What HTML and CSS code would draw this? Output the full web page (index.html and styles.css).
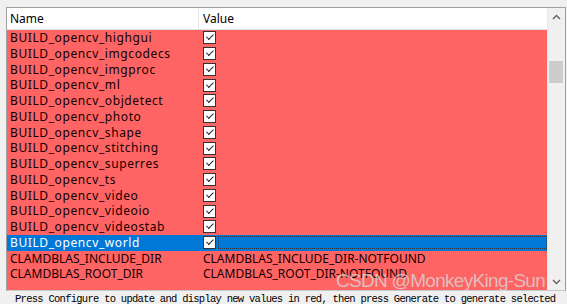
FILE: index.html
```html
<!DOCTYPE html>
<html>
<head>
<meta charset="utf-8">
<link rel="stylesheet" href="styles.css">
</head>
<body>
<div class="page">
  <div class="tree">
    <div class="list">
      <div class="header">
        <div class="hcell name-col">Name</div>
        <div class="hcell value-col">Value</div>
      </div>
      <div class="rows">
        <div class="row"><div class="name-col lc">BUILD_opencv_highgui</div><div class="value-col"><span class="cb"></span></div></div>
        <div class="row"><div class="name-col lc">BUILD_opencv_imgcodecs</div><div class="value-col"><span class="cb"></span></div></div>
        <div class="row"><div class="name-col lc">BUILD_opencv_imgproc</div><div class="value-col"><span class="cb"></span></div></div>
        <div class="row"><div class="name-col lc">BUILD_opencv_ml</div><div class="value-col"><span class="cb"></span></div></div>
        <div class="row"><div class="name-col lc">BUILD_opencv_objdetect</div><div class="value-col"><span class="cb"></span></div></div>
        <div class="row"><div class="name-col lc">BUILD_opencv_photo</div><div class="value-col"><span class="cb"></span></div></div>
        <div class="row"><div class="name-col lc">BUILD_opencv_shape</div><div class="value-col"><span class="cb"></span></div></div>
        <div class="row"><div class="name-col lc">BUILD_opencv_stitching</div><div class="value-col"><span class="cb"></span></div></div>
        <div class="row"><div class="name-col lc">BUILD_opencv_superres</div><div class="value-col"><span class="cb"></span></div></div>
        <div class="row"><div class="name-col lc">BUILD_opencv_ts</div><div class="value-col"><span class="cb"></span></div></div>
        <div class="row"><div class="name-col lc">BUILD_opencv_video</div><div class="value-col"><span class="cb"></span></div></div>
        <div class="row"><div class="name-col lc">BUILD_opencv_videoio</div><div class="value-col"><span class="cb"></span></div></div>
        <div class="row"><div class="name-col lc">BUILD_opencv_videostab</div><div class="value-col"><span class="cb"></span></div></div>
        <div class="row selected"><div class="name-col lc">BUILD_opencv_world</div><div class="value-col"><span class="cb"></span><span class="focus"></span></div></div>
        <div class="row"><div class="name-col">CLAMDBLAS_INCLUDE_DIR</div><div class="value-col">CLAMDBLAS_INCLUDE_DIR-NOTFOUND</div></div>
        <div class="row"><div class="name-col">CLAMDBLAS_ROOT_DIR</div><div class="value-col">CLAMDBLAS_ROOT_DIR-NOTFOUND</div></div>
        <div class="row"><div class="name-col"></div><div class="value-col"></div></div>
      </div>
    </div>
    <div class="scrollbar">
      <div class="arrow"><svg width="9" height="6" viewBox="0 0 9 6"><path d="M1 5 L4.5 1.5 L8 5" fill="none" stroke="#606060" stroke-width="1.4"/></svg></div>
      <div class="track"><div class="thumb"></div></div>
      <div class="arrow"><svg width="9" height="6" viewBox="0 0 9 6"><path d="M1 1 L4.5 4.5 L8 1" fill="none" stroke="#606060" stroke-width="1.4"/></svg></div>
    </div>
  </div>
  <div class="status">Press Configure to update and display new values in red, then press Generate to generate selected</div>
  <div class="watermark">CSDN @MonkeyKing-Sun</div>
</div>
</body>
</html>
```

FILE: styles.css
```css
html, body {
  margin: 0;
  padding: 0;
  background: #f0f0f0;
  width: 567px;
  height: 304px;
  overflow: hidden;
}
.page {
  position: relative;
  padding: 7px 1px 0 6px;
  font-family: "Noto Sans", "Open Sans", sans-serif;
  font-size: 12px;
}
.tree {
  display: flex;
  height: 282px;
  border: 1px solid #a0a0a0;
  border-bottom-color: #c8c8c8;
  background: #ffffff;
  overflow: hidden;
}
.list {
  width: 541px;
  display: flex;
  flex-direction: column;
  overflow: hidden;
}
.header {
  display: flex;
  height: 21px;
  flex: none;
  border-bottom: 1px solid #e5e5e5;
  background: #fff;
  color: #000;
}
.hcell {
  display: flex;
  align-items: center;
}
.header .name-col {
  border-right: 1px solid #e5e5e5;
}
.name-col {
  width: 192px;
  padding-left: 3px;
  box-sizing: border-box;
  flex: none;
  white-space: nowrap;
  overflow: hidden;
}
.name-col.lc {
  letter-spacing: 0.6px;
}
.value-col {
  flex: 1;
  padding-left: 4px;
  display: flex;
  align-items: center;
  white-space: nowrap;
  position: relative;
}
.rows {
  flex: 1;
  background: #ff6464;
}
.row {
  display: flex;
  height: 15.75px;
  align-items: center;
  line-height: 15.75px;
  color: #140000;
  background: #ff6464;
}
.row.selected {
  background: #0078d7;
  color: #ffffff;
}
.cb {
  width: 11px;
  height: 11px;
  border: 1px solid #333;
  background: #fff;
  position: relative;
  flex: none;
}
.cb::after {
  content: "";
  position: absolute;
  left: 2px;
  top: 1px;
  width: 6px;
  height: 3px;
  border-left: 1.5px solid #222;
  border-bottom: 1.5px solid #222;
  transform: rotate(-45deg) translate(-0.5px, 1px);
}
.focus {
  position: absolute;
  left: 19px;
  right: 0;
  top: 0;
  bottom: 0;
  border: 1px dotted #333;
}
.scrollbar {
  width: 17px;
  flex: none;
  display: flex;
  flex-direction: column;
  background: #f0f0f0;
  border-left: 1px solid #e8e8e8;
}
.arrow {
  height: 17px;
  display: flex;
  align-items: center;
  justify-content: center;
  flex: none;
}
.track {
  flex: 1;
  padding-top: 36px;
}
.thumb {
  margin: 0 2px 0 1px;
  height: 22px;
  background: #cdcdcd;
}
.status {
  font-family: "Liberation Mono", "DejaVu Sans Mono", monospace;
  font-size: 10.5px;
  line-height: 12px;
  letter-spacing: -0.73px;
  color: #000;
  padding-left: 9px;
  margin-top: 2px;
  white-space: nowrap;
}
.watermark {
  position: absolute;
  left: 336px;
  top: 270px;
  font-family: "Liberation Sans", Arial, sans-serif;
  font-size: 19px;
  letter-spacing: -0.7px;
  color: rgba(215, 215, 215, 0.78);
  white-space: nowrap;
}
```
